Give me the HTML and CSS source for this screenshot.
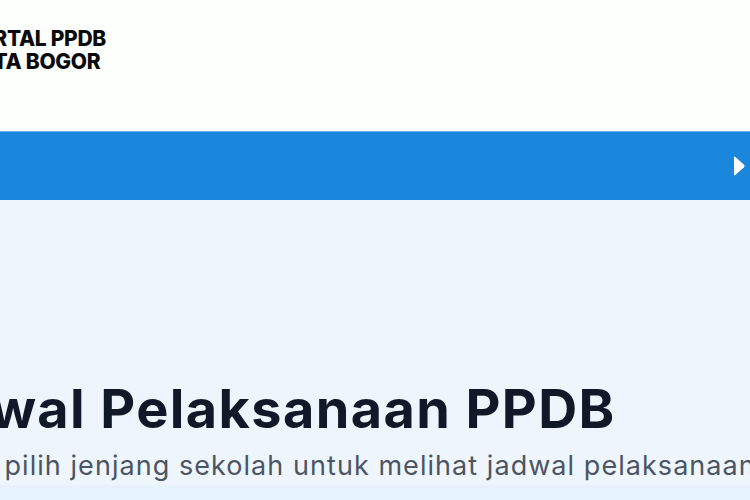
FILE: index.html
```html
<!DOCTYPE html>
<html lang="id">
<head>
<meta charset="utf-8">
<title>Jadwal Pelaksanaan PPDB</title>
<link rel="stylesheet" href="styles.css">
</head>
<body>
<header class="top">
  <div class="brand">
    <span class="brand-line">PORTAL PPDB</span>
    <span class="brand-line">KOTA BOGOR</span>
  </div>
</header>
<nav class="navbar">
  <span class="nav-arrow">
    <svg width="14" height="22" viewBox="0 0 14 22"><path d="M2 2.5 Q2 1 3.3 1.9 L12 9.8 Q13.2 11 12 12.2 L3.3 20.1 Q2 21 2 19.5 Z" fill="#ffffff"/></svg>
  </span>
</nav>
<main class="hero">
  <h1 class="title">Jadwal Pelaksanaan PPDB</h1>
  <p class="subtitle">Silakan pilih jenjang sekolah untuk melihat jadwal pelaksanaan PPDB</p>
  <div class="band"></div>
</main>
</body>
</html>
```
FILE: styles.css
```css
html, body {
  margin: 0;
  padding: 0;
  width: 750px;
  height: 500px;
  overflow: hidden;
  background: #eef5fd;
  font-family: Inter, "Noto Sans", sans-serif;
}
.top {
  height: 131px;
  background: #fdfffd;
  display: flex;
  align-items: flex-start;
}
.brand {
  display: flex;
  flex-direction: column;
  gap: 1px;
  margin-left: -36px;
  padding-top: 28px;
}
.brand-line {
  font-weight: 800;
  font-size: 21px;
  line-height: 22px;
  letter-spacing: -0.3px;
  color: #0b0b0d;
}
.navbar {
  height: 68px;
  background: #1a87dc;
  border-top: 1px solid #6fb0e4;
  display: flex;
  align-items: center;
  justify-content: flex-end;
  padding-right: 4px;
}
.nav-arrow {
  display: flex;
}
.hero {
  display: flex;
  flex-direction: column;
  background: #eef5fd;
  white-space: nowrap;
}
.title {
  margin: 177px 0 0 -111px;
  font-size: 54px;
  line-height: 64px;
  font-weight: 700;
  color: #111827;
  letter-spacing: 1.4px;
}
.subtitle {
  margin: 8px 0 0 -103px;
  font-size: 27px;
  line-height: 34px;
  letter-spacing: 1.05px;
  color: #4b5563;
}
.band {
  height: 20px;
  margin-top: 2px;
  background: #e6f3fc;
}
```
